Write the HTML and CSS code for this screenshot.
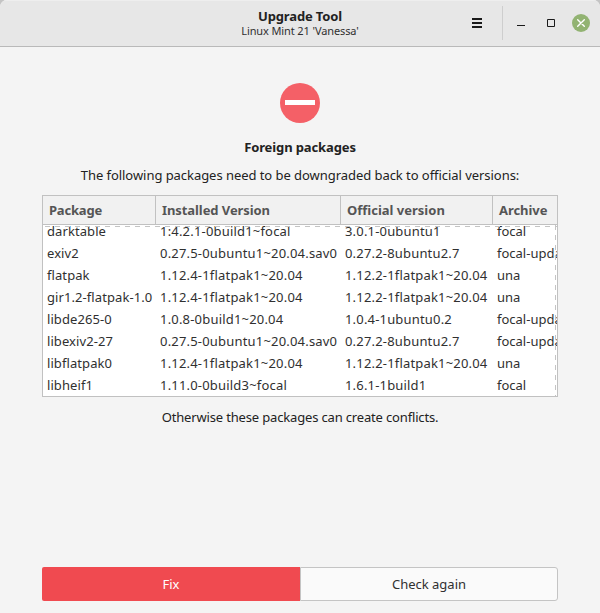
FILE: index.html
```html
<!DOCTYPE html>
<html lang="en">
<head>
<meta charset="utf-8">
<title>Upgrade Tool</title>
<link rel="stylesheet" href="styles.css">
</head>
<body>
<div class="window">
  <header class="titlebar">
    <div class="titles">
      <div class="title">Upgrade Tool</div>
      <div class="subtitle">Linux Mint 21 'Vanessa'</div>
    </div>
    <div class="controls">
      <svg class="menu" width="10" height="10" viewBox="0 0 10 10" fill="#1a1a1a"><path d="M0 0h10v2H0zM0 4h10v2H0zM0 8h10v2H0z"/></svg>
      <span class="divider"></span>
      <svg class="minimize" width="8" height="8" viewBox="0 0 8 8"><path d="M0 6h8v1H0z" fill="#1a1a1a"/></svg>
      <svg class="maximize" width="8" height="8" viewBox="0 0 8 8"><path d="M.5.5h7v7h-7z" fill="none" stroke="#1a1a1a"/></svg>
      <svg class="close" width="18" height="18" viewBox="0 0 18 18"><circle cx="9" cy="9" r="9" fill="#92b372"/><path d="M5.7 5.7l6.6 6.6M12.3 5.7l-6.6 6.6" stroke="#fff" stroke-width="1.4" stroke-linecap="round"/></svg>
    </div>
  </header>
  <main class="content">
    <svg class="stop" width="40" height="40" viewBox="0 0 40 40"><circle cx="20" cy="20" r="20" fill="#f46067"/><path d="M5 17h30v5H5z" fill="#fff"/></svg>
    <h1 class="heading">Foreign packages</h1>
    <p class="intro">The following packages need to be downgraded back to official versions:</p>
    <section class="table">
      <div class="row head"><span>Package</span><span>Installed Version</span><span>Official version</span><span>Archive</span></div>
      <div class="viewport">
        <div class="rows">
          <div class="row"><span>darktable</span><span>1:4.2.1-0build1~focal</span><span>3.0.1-0ubuntu1</span><span>focal</span></div>
          <div class="row"><span>exiv2</span><span>0.27.5-0ubuntu1~20.04.sav0</span><span>0.27.2-8ubuntu2.7</span><span>focal-updates</span></div>
          <div class="row"><span>flatpak</span><span>1.12.4-1flatpak1~20.04</span><span>1.12.2-1flatpak1~20.04</span><span>una</span></div>
          <div class="row"><span>gir1.2-flatpak-1.0</span><span>1.12.4-1flatpak1~20.04</span><span>1.12.2-1flatpak1~20.04</span><span>una</span></div>
          <div class="row"><span>libde265-0</span><span>1.0.8-0build1~20.04</span><span>1.0.4-1ubuntu0.2</span><span>focal-updates</span></div>
          <div class="row"><span>libexiv2-27</span><span>0.27.5-0ubuntu1~20.04.sav0</span><span>0.27.2-8ubuntu2.7</span><span>focal-updates</span></div>
          <div class="row"><span>libflatpak0</span><span>1.12.4-1flatpak1~20.04</span><span>1.12.2-1flatpak1~20.04</span><span>una</span></div>
          <div class="row"><span>libheif1</span><span>1.11.0-0build3~focal</span><span>1.6.1-1build1</span><span>focal</span></div>
        </div>
      </div>
    </section>
    <p class="note">Otherwise these packages can create conflicts.</p>
    <div class="actions"><button class="btn fix">Fix</button><button class="btn check">Check again</button></div>
  </main>
</div>
</body>
</html>
```
FILE: styles.css
```css
* { box-sizing: border-box; }
body { margin: 0; background: #c4c4c4; font: 13px/20px "Noto Sans", sans-serif; color: #303030; }
.window { height: 613px; display: flex; flex-direction: column; background: #f4f4f4; border-radius: 7px 7px 0 0; overflow: hidden; }
.titlebar { height: 47px; flex: none; display: grid; grid-template-columns: 1fr auto 1fr; background: #e7e7e7; border-bottom: 1px solid #b9b9b9; box-shadow: inset 0 1px #eee; }
.titles { grid-column: 2; padding-top: 8px; text-align: center; color: #222; }
.title { font-weight: 700; line-height: 17px; letter-spacing: -.15px; }
.subtitle { font-size: 11px; line-height: 13px; letter-spacing: -.12px; color: #303030; margin-top: -1px; }
.controls { grid-column: 3; display: flex; justify-content: flex-end; align-items: center; padding-right: 10px; }
.divider { width: 1px; height: 34px; background: #cecece; margin: 0 14px 0 20px; }
.minimize { margin-right: 22px; }
.maximize { margin-right: 17px; }
.content { flex: 1; display: flex; flex-direction: column; align-items: center; padding: 36px 42px 12px; }
.stop { flex: none; }
.heading { margin: 14px 0 0; font-size: 13px; line-height: 20px; font-weight: 700; color: #222; letter-spacing: -.12px; }
.intro, .note { margin: 0; white-space: nowrap; color: #222; }
.intro { margin-top: 8px; letter-spacing: -.05px; }
.table { width: 516px; height: 202px; margin-top: 10px; border: 1px solid #c1c1c1; background: #fff; display: flex; flex-direction: column; overflow: hidden; }
.row { display: grid; grid-template-columns: 113px 185px 152px 64px; height: 22px; line-height: 22px; }
.row span { padding-left: 4px; white-space: nowrap; }
.row span:nth-child(1) { letter-spacing: .08px; }
.row span:nth-child(2) { letter-spacing: .19px; }
.row span:nth-child(3) { letter-spacing: .18px; }
.head { flex: none; height: 29px; line-height: 29px; background: #f1f1f1; border-bottom: 1px solid #c1c1c1; font-weight: 700; color: #555; }
.head span { padding-left: 6px; border-right: 1px solid #c1c1c1; }
.row.head span:nth-child(1) { letter-spacing: -.2px; }
.row.head span:nth-child(2) { letter-spacing: -.08px; }
.row.head span:nth-child(3) { letter-spacing: 0; }
.row.head span:nth-child(4) { letter-spacing: -.05px; border-right: 0; }
.viewport { flex: 1; position: relative; overflow: hidden; }
.rows { margin-top: -5px; }
.viewport::before, .viewport::after { content: ""; position: absolute; z-index: 1; }
.viewport::before { left: 0; right: 0; top: 1px; height: 1px; background: repeating-linear-gradient(90deg, transparent 0 2px, #c4c4c4 2px 7px, transparent 7px 10px); }
.viewport::after { right: 1px; top: 0; bottom: 0; width: 1px; background: repeating-linear-gradient(180deg, #c4c4c4 0 5px, transparent 5px 10px); }
.note { margin-top: 10px; letter-spacing: -.16px; }
.actions { width: 516px; display: flex; margin-top: auto; }
.btn { flex: none; width: 258px; height: 34px; padding: 0; font: inherit; }
.fix { background: #f04a50; color: #fff; border: 0; border-radius: 2px 0 0 2px; }
.check { background: #fafafa; color: #303030; border: 1px solid #c4c4c4; border-radius: 0 3px 3px 0; }
```
